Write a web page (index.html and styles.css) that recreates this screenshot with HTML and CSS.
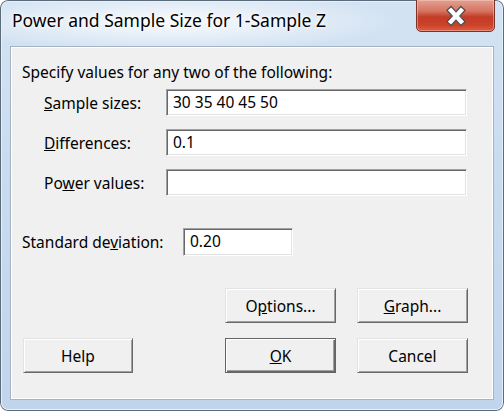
FILE: index.html
```html
<!DOCTYPE html>
<html lang="en">
<head>
    <meta charset="UTF-8">
    <title>Power and Sample Size for 1-Sample Z</title>
    <link rel="stylesheet" href="styles.css">
</head>
<body>
    <div class="window">
        <div class="titlebar">
            <span class="title">Power and Sample Size for 1-Sample Z</span>
            <button class="close" title="Close">
                <svg width="24" height="22" viewBox="0 0 24 22">
                    <path d="M7 5.5 L17 16.5 M17 5.5 L7 16.5" stroke="#505050" stroke-width="7" stroke-linecap="square"/>
                    <path d="M7 5.5 L17 16.5 M17 5.5 L7 16.5" stroke="#ffffff" stroke-width="4.4" stroke-linecap="square"/>
                </svg>
            </button>
        </div>
        <div class="client">
            <p class="intro">Specify values for any two of the following:</p>

            <div class="field">
                <label><u>S</u>ample sizes:</label>
                <div class="textbox">30 35 40 45 50</div>
            </div>
            <div class="field">
                <label><u>D</u>ifferences:</label>
                <div class="textbox">0.1</div>
            </div>
            <div class="field">
                <label>Po<u>w</u>er values:</label>
                <div class="textbox"></div>
            </div>

            <div class="field std">
                <label>Standard de<u>v</u>iation:</label>
                <div class="textbox">0.20</div>
            </div>

            <div class="buttons">
                <button class="btn options">O<u>p</u>tions...</button>
                <button class="btn graph"><u>G</u>raph...</button>
                <button class="btn help">Help</button>
                <button class="btn ok default"><u>O</u>K</button>
                <button class="btn cancel">Cancel</button>
            </div>
        </div>
    </div>
</body>
</html>
```

FILE: styles.css
```css
html, body {
    margin: 0;
    padding: 0;
}
body {
    width: 504px;
    height: 411px;
    overflow: hidden;
    font-family: "Noto Sans", "Open Sans", sans-serif;
    font-size: 15.5px;
    color: #000;
}
.window {
    box-sizing: border-box;
    width: 504px;
    height: 411px;
    padding: 0 10px 11px 10px;
    border-radius: 8px;
    background:
        radial-gradient(ellipse 230px 30px at 170px 22px, rgba(255,255,255,0.85), rgba(255,255,255,0) 100%),
        linear-gradient(to bottom, #d4e3f3 0%, #c9dcef 40%, #c0d5ec 100%);
    box-shadow: inset 0 0 0 1px #5c6b7a, inset 0 0 0 2px #e6f0fa;
    display: flex;
    flex-direction: column;
}
.titlebar {
    height: 46px;
    display: flex;
    justify-content: space-between;
    align-items: flex-start;
    flex-shrink: 0;
}
.title {
    margin: 9px 0 0 2px;
    font-size: 17.5px;
    line-height: 22px;
    color: #000;
    text-shadow: 0 0 6px #fff, 0 0 3px #fff;
}
.close {
    width: 79px;
    height: 33px;
    margin: -1px -1px 0 0;
    padding: 0;
    border: 1px solid #7b3328;
    border-radius: 0 0 5px 5px;
    background: linear-gradient(to bottom, #e2a193 0%, #d77562 35%, #c23c27 55%, #cc4229 80%, #dc5d42 100%);
    box-shadow: inset 0 0 0 1px rgba(255,220,210,0.4);
    display: flex;
    align-items: center;
    justify-content: center;
}
.close svg {
    display: block;
    margin-top: 1px;
}
.client {
    flex: 1;
    background: #f0f0f0;
    border: 1px solid #a5b4c4;
    box-shadow: inset 0 0 0 1px #ffffff;
}
.intro {
    margin: 16px 0 8px 11px;
    line-height: 18px;
}
.field {
    display: flex;
    align-items: center;
    margin-bottom: 13px;
    margin-left: 33px;
}
.field label {
    width: 122px;
}
.textbox {
    box-sizing: border-box;
    width: 301px;
    height: 27px;
    padding: 1px 6px 0;
    line-height: 23px;
    background: #fff;
    border: 1px solid;
    border-color: #a0a0a0 #ffffff #ffffff #a0a0a0;
    box-shadow: inset 1px 1px #696969, inset -1px -1px #e3e3e3;
}
.field.std {
    margin: 32px 0 0 11px;
}
.field.std label {
    width: 161px;
}
.field.std .textbox {
    width: 110px;
    height: 28px;
}
.buttons {
    display: grid;
    grid-template-columns: 110px 50px 111px 111px;
    grid-template-rows: 35px 35px;
    column-gap: 21px;
    row-gap: 15px;
    margin: 32px 0 0 12px;
}
.btn {
    font-family: inherit;
    font-size: 15.5px;
    color: #000;
    padding: 0;
    background: #f0f0f0;
    border: 1px solid;
    border-color: #e3e3e3 #696969 #696969 #e3e3e3;
    box-shadow: inset 1px 1px #ffffff, inset -1px -1px #a0a0a0;
}
.btn.default {
    border-color: #646464;
    box-shadow: inset 1px 1px #ffffff, inset -1px -1px #696969, inset -2px -2px #a0a0a0;
}
.options { grid-column: 3; grid-row: 1; }
.graph { grid-column: 4; grid-row: 1; }
.help { grid-column: 1; grid-row: 2; }
.ok { grid-column: 3; grid-row: 2; }
.cancel { grid-column: 4; grid-row: 2; }
```
